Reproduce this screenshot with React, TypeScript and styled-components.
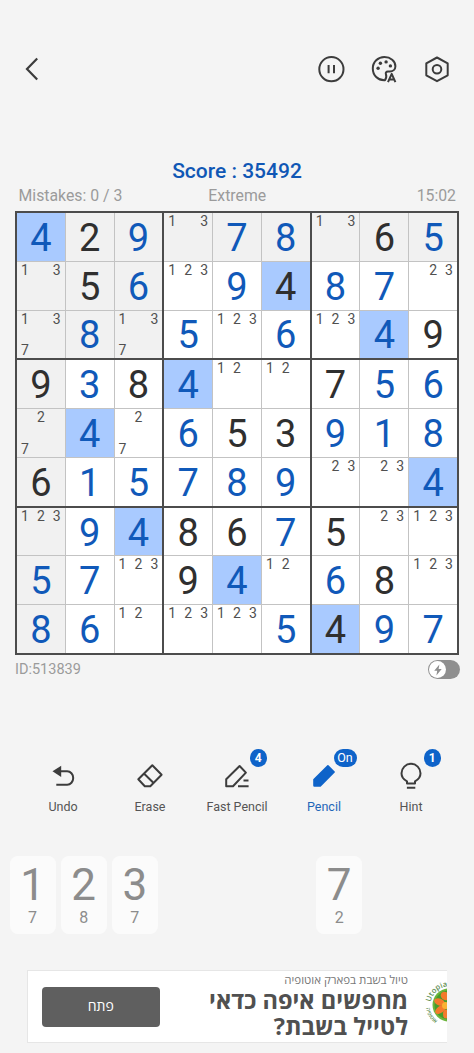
// App.tsx
import React, { useState } from "react";
import styled, { createGlobalStyle } from "styled-components";

type CellData = {
  value?: number;
  given?: boolean;
  notes?: number[];
};

// "4" = filled by player, "g4" = given clue, "n13" = pencil notes 1 and 3
const rows = [
  "4 g2 9 n13 7 8 n13 g6 5",
  "n13 g5 6 n123 9 g4 8 7 n23",
  "n137 8 n137 5 n123 6 n123 4 g9",
  "g9 3 g8 4 n12 n12 g7 5 6",
  "n27 4 n27 6 g5 g3 9 1 8",
  "g6 1 5 7 8 9 n23 n23 4",
  "n123 9 4 g8 g6 7 g5 n23 n123",
  "5 7 n123 g9 4 n12 6 g8 n123",
  "8 6 n12 n123 n123 5 g4 9 7",
];

const parseCell = (token: string): CellData => {
  if (token[0] === "n") return { notes: token.slice(1).split("").map(Number) };
  if (token[0] === "g") return { value: Number(token[1]), given: true };
  return { value: Number(token) };
};

const board = rows.map((row) => row.split(" ").map(parseCell));
const nine = [0, 1, 2, 3, 4, 5, 6, 7, 8];

const keys = [
  { digit: 1, left: 7 },
  { digit: 2, left: 8 },
  { digit: 3, left: 7 },
  { digit: 4, left: 0 },
  { digit: 5, left: 0 },
  { digit: 6, left: 0 },
  { digit: 7, left: 2 },
  { digit: 8, left: 0 },
  { digit: 9, left: 0 },
];

function App() {
  const [selected, setSelected] = useState({ row: 0, col: 0 });
  const [pencil, setPencil] = useState(true);
  const selectedValue = board[selected.row][selected.col].value;

  const isPeer = (row: number, col: number) =>
    row === selected.row ||
    col === selected.col ||
    (Math.floor(row / 3) === Math.floor(selected.row / 3) &&
      Math.floor(col / 3) === Math.floor(selected.col / 3));

  return (
    <Container>
      <GlobalStyle />
      <Header>
        <BackButton aria-label="Back">
          <svg width="14" height="24" viewBox="0 0 14 24">
            <path d="M12.2 1.5 2 12l10.2 10.5" />
          </svg>
        </BackButton>
        <HeaderIcons>
          <PauseIcon />
          <PaletteIcon />
          <SettingsIcon />
        </HeaderIcons>
      </Header>
      <Score>Score : 35492</Score>
      <StatusRow>
        <span>Mistakes: 0 / 3</span>
        <span>Extreme</span>
        <span>15:02</span>
      </StatusRow>
      <Board>
        {nine.map((box) => (
          <Box key={box}>
            {nine.map((i) => {
              const row = Math.floor(box / 3) * 3 + Math.floor(i / 3);
              const col = (box % 3) * 3 + (i % 3);
              const cell = board[row][col];
              const same = !!cell.value && cell.value === selectedValue;
              return (
                <Cell
                  key={i}
                  $same={same}
                  $peer={isPeer(row, col)}
                  onClick={() => setSelected({ row, col })}
                >
                  {cell.value ? (
                    <Digit $given={cell.given}>{cell.value}</Digit>
                  ) : (
                    <Notes>
                      {nine.map((n) => (
                        <Note key={n}>
                          {cell.notes?.includes(n + 1) ? n + 1 : ""}
                        </Note>
                      ))}
                    </Notes>
                  )}
                </Cell>
              );
            })}
          </Box>
        ))}
      </Board>
      <BoardFooter>
        <span>ID:513839</span>
        <Switch>
          <Knob>
            <svg width="10" height="12" viewBox="0 0 10 12">
              <path d="M6.4.6 1.2 6.8h3L3.4 11.4l5.3-6.5H5.6z" fill="#8f8f8f" />
            </svg>
          </Knob>
        </Switch>
      </BoardFooter>
      <Tools>
        <Tool>
          <UndoIcon />
          <ToolLabel>Undo</ToolLabel>
        </Tool>
        <Tool>
          <EraseIcon />
          <ToolLabel>Erase</ToolLabel>
        </Tool>
        <Tool>
          <FastPencilIcon />
          <Badge>4</Badge>
          <ToolLabel>Fast Pencil</ToolLabel>
        </Tool>
        <Tool onClick={() => setPencil(!pencil)}>
          <PencilIcon />
          <Badge $wide>{pencil ? "On" : "Off"}</Badge>
          <ToolLabel $active={pencil}>Pencil</ToolLabel>
        </Tool>
        <Tool>
          <HintIcon />
          <Badge>1</Badge>
          <ToolLabel>Hint</ToolLabel>
        </Tool>
      </Tools>
      <Keypad>
        {keys.map(({ digit, left }) =>
          left > 0 ? (
            <Key key={digit}>
              <KeyDigit>{digit}</KeyDigit>
              <KeyCount>{left}</KeyCount>
            </Key>
          ) : (
            <span key={digit} />
          )
        )}
      </Keypad>
      <Ad>
        <AdButton>פתח</AdButton>
        <AdText>
          <AdCaption>טיול בשבת בפארק אוטופיה</AdCaption>
          <AdTitle>
            מחפשים איפה כדאי
            <br />
            לטייל בשבת?
          </AdTitle>
        </AdText>
        <AdLogo />
      </Ad>
    </Container>
  );
}

const PauseIcon = () => (
  <LineIcon width="28" height="28" viewBox="0 0 28 28">
    <circle cx="14.400" cy="14.200" r="12.100" />
    <path d="M11.600 10v8.200M17 10v8.200" />
  </LineIcon>
);

const PaletteIcon = () => (
  <LineIcon width="28" height="28" viewBox="0 0 28 28">
    <path d="M15 25.200C7.800 25.600 2.800 20.200 2.800 13.500 2.800 7 7.900 2 14.400 2c6.200 0 11 4 11 9.200 0 3.300-2.500 5.300-5.600 5.300h-1.900c-1.700 0-2.500 1.300-2 2.700.7 2 .9 3.600-.9 6z" />
    <g fill="#3c3c3c" stroke="none">
      <circle cx="8.100" cy="13.300" r="1.700" />
      <circle cx="10.400" cy="8.200" r="1.700" />
      <circle cx="16.100" cy="6.900" r="1.700" />
      <circle cx="20.400" cy="10.900" r="1.700" />
    </g>
    <path d="m18 27.200 3.700-8.400 3.700 8.400M19.300 24.500h4.800" />
  </LineIcon>
);

const SettingsIcon = () => (
  <LineIcon width="28" height="28" viewBox="0 0 28 28">
    <path d="M14 2.500 24.700 8.400v11.900L14 26.200 3.300 20.300V8.400z" />
    <circle cx="14" cy="14.300" r="4.300" />
  </LineIcon>
);

const UndoIcon = () => (
  <LineIcon width="28" height="28" viewBox="0 0 28 28">
    <path d="M11 9.300h7.200a6 6.700 0 0 1 0 13.400H7.300" />
    <path d="M3.500 9.300 12.200 3.700v11.200z" fill="#3c3c3c" stroke="none" />
  </LineIcon>
);

const EraseIcon = () => (
  <LineIcon width="28" height="28" viewBox="0 0 28 28">
    <path d="m2.300 17.200 14-14 9.300 9.600-11.300 11.400H8.800zM8.200 11.700l9.400 9.300" />
  </LineIcon>
);

const FastPencilIcon = () => (
  <LineIcon width="28" height="28" viewBox="0 0 28 28">
    <path d="M3.200 24.200v-7L16.600 4l6.300 6.600L10 24.200zM15 24.200h10.600M20.500 18.500h5" />
  </LineIcon>
);

const PencilIcon = () => (
  <svg width="28" height="28" viewBox="0 0 28 28">
    <path
      d="M3.200 17.300 17.300 3.200q.6-.5 1.200 0l6.200 6.200q.6.600 0 1.200L10.600 24.700H4.400q-1.200 0-1.200-1.200z"
      fill="#0e63c9"
    />
  </svg>
);

const HintIcon = () => (
  <LineIcon width="28" height="28" viewBox="0 0 28 28">
    <path d="M10 21.600v-2.300C6.300 17.500 4.500 14.900 4.500 11.300a9.500 9.500 0 0 1 19 0c0 3.600-1.800 6.200-5.500 8v2.300zM9.900 25.800h8.400" />
  </LineIcon>
);

const AdLogo = () => (
  <LogoSvg width="22" height="54" viewBox="0 0 22 54">
    <defs>
      <path id="logoTop" d="M5.500 24a18.500 18.500 0 0 1 37 0" />
      <path id="logoBottom" d="M1 24a23 23 0 0 0 23 23" />
    </defs>
    <circle cx="24" cy="24" r="16.500" fill="#6cb53c" />
    <circle cx="24" cy="24" r="14.500" fill="#459c2c" />
    <g fill="#f47a2c">
      <ellipse cx="14.500" cy="21" rx="5.500" ry="3.400" transform="rotate(20 14.500 21)" />
      <ellipse cx="15.500" cy="28.500" rx="6" ry="3.400" transform="rotate(-35 15.500 28.500)" />
      <ellipse cx="20" cy="15" rx="4.500" ry="4" transform="rotate(40 20 15)" />
      <ellipse cx="21" cy="33" rx="3" ry="4.500" />
    </g>
    <circle cx="20.500" cy="24.500" r="3.500" fill="#f9b233" />
    <LogoText>
      <textPath href="#logoTop" startOffset="3">Utopia</textPath>
    </LogoText>
    <LogoText $small>
      <textPath href="#logoBottom" startOffset="3">אוטופיה</textPath>
    </LogoText>
  </LogoSvg>
);

const GlobalStyle = createGlobalStyle`
  * {
    box-sizing: border-box;
  }

  body {
    margin: 0;
    background-color: #f4f4f4;
    font-family: Roboto, "Liberation Sans", sans-serif;
  }
`;

const Container = styled.div`
  display: flex;
  width: 474px;
  height: 1053px;
  flex-direction: column;
  overflow: hidden;
  background-color: #f4f4f4;
`;

const Header = styled.header`
  display: flex;
  margin-top: 55px;
  height: 28px;
  padding: 0 23px 0 24.500px;
  align-items: center;
  justify-content: space-between;
`;

const BackButton = styled.button`
  display: flex;
  padding: 0;
  border: none;
  background: none;
  cursor: pointer;

  path {
    fill: none;
    stroke: #3c3c3c;
    stroke-width: 2.2;
  }
`;

const HeaderIcons = styled.div`
  display: flex;
  gap: 25px;
`;

const LineIcon = styled.svg`
  fill: none;
  stroke: #3c3c3c;
  stroke-width: 2;
  stroke-linejoin: round;
`;

const Score = styled.div`
  margin-top: 74px;
  height: 28px;
  line-height: 28px;
  font-size: 21px;
  font-weight: 500;
  text-align: center;
  color: #1057b5;
`;

const StatusRow = styled.div`
  display: grid;
  grid-template-columns: 1fr 1fr 1fr;
  height: 26px;
  padding: 0 18px 0 18.500px;
  line-height: 22px;
  font-size: 15.800px;
  color: #9b9b9b;

  span:nth-child(2) {
    text-align: center;
  }

  span:nth-child(3) {
    text-align: right;
  }
`;

const Board = styled.div`
  display: grid;
  width: 444px;
  height: 444px;
  margin-left: 15px;
  padding: 2px;
  gap: 2px;
  flex-shrink: 0;
  grid-template-columns: repeat(3, minmax(0, 1fr));
  grid-template-rows: repeat(3, minmax(0, 1fr));
  background-color: #4c4c4c;
`;

const Box = styled.div`
  display: grid;
  gap: 1px;
  grid-template-columns: repeat(3, minmax(0, 1fr));
  grid-template-rows: repeat(3, minmax(0, 1fr));
  background-color: #c3c3c3;
`;

const Cell = styled.div<{ $same: boolean; $peer: boolean }>`
  display: flex;
  min-width: 0;
  min-height: 0;
  align-items: center;
  justify-content: center;
  background-color: ${({ $same, $peer }) =>
    $same ? "#a9caff" : $peer ? "#f1f1f1" : "#fff"};
  cursor: pointer;
`;

const Digit = styled.span<{ $given?: boolean }>`
  padding-top: 2px;
  font-size: 38px;
  line-height: 46px;
  color: ${({ $given }) => ($given ? "#2f2f2f" : "#1059b9")};
`;

const Notes = styled.div`
  display: grid;
  width: 100%;
  height: 100%;
  grid-template-columns: repeat(3, minmax(0, 1fr));
  grid-template-rows: repeat(3, minmax(0, 1fr));
`;

const Note = styled.span`
  font-size: 14px;
  line-height: 17px;
  text-align: center;
  color: #505050;
`;

const BoardFooter = styled.div`
  display: flex;
  height: 29px;
  padding: 0 14px 0 15px;
  align-items: center;
  justify-content: space-between;
  font-size: 14.500px;
  color: #9b9b9b;
`;

const Switch = styled.div`
  display: flex;
  width: 32px;
  height: 19px;
  padding: 1px;
  border-radius: 10px;
  background-color: #8f8f8f;
`;

const Knob = styled.div`
  display: flex;
  width: 17px;
  height: 17px;
  align-items: center;
  justify-content: center;
  border-radius: 50%;
  background-color: #fff;
`;

const Tools = styled.div`
  display: grid;
  margin-top: 78px;
  padding: 0 19.500px;
  grid-template-columns: repeat(5, 1fr);
`;

const Tool = styled.div`
  position: relative;
  display: flex;
  flex-direction: column;
  align-items: center;
  cursor: pointer;
`;

const ToolLabel = styled.span<{ $active?: boolean }>`
  margin-top: 8px;
  font-size: 12.500px;
  line-height: 18px;
  white-space: nowrap;
  color: ${({ $active }) => ($active ? "#1f66b8" : "#555")};
`;

const Badge = styled.span<{ $wide?: boolean }>`
  position: absolute;
  top: -13px;
  left: ${({ $wide }) => ($wide ? "53px" : "56px")};
  width: ${({ $wide }) => ($wide ? "23px" : "17.500px")};
  height: 17.500px;
  border-radius: 9px;
  background-color: #0e63c9;
  color: #fff;
  font-size: ${({ $wide }) => ($wide ? "12.500px" : "12px")};
  font-weight: ${({ $wide }) => ($wide ? 400 : 700)};
  line-height: 18px;
  text-align: center;
`;

const Keypad = styled.div`
  display: grid;
  margin-top: 40px;
  padding: 0 7px;
  height: 78px;
  grid-template-columns: repeat(9, 1fr);
`;

const Key = styled.div`
  display: flex;
  margin: 0 2.500px;
  flex-direction: column;
  align-items: center;
  border-radius: 8px;
  background-color: #fbfbfb;
  color: #8c8c8c;
  cursor: pointer;
`;

const KeyDigit = styled.span`
  margin-top: 6px;
  font-size: 44px;
  line-height: 47px;
`;

const KeyCount = styled.span`
  font-size: 16px;
  line-height: 17px;
`;

const Ad = styled.div`
  display: flex;
  width: 420px;
  height: 73px;
  margin: 36px 0 0 27px;
  border: 1px solid #e6e6e6;
  border-right: none;
  background-color: #fff;
`;

const AdButton = styled.button`
  width: 118.500px;
  height: 40px;
  margin: 16px 0 0 13.500px;
  padding: 0 0 3px;
  border: none;
  border-radius: 4px;
  background-color: #5f5f5f;
  color: #fff;
  font-family: "Open Sans", "DejaVu Sans", sans-serif;
  font-size: 14px;
  cursor: pointer;
`;

const AdText = styled.div`
  flex: 1;
  padding-right: 17px;
  direction: rtl;
  white-space: nowrap;
  font-family: "Open Sans", "DejaVu Sans", sans-serif;
`;

const AdCaption = styled.div`
  height: 17px;
  font-size: 11.500px;
  line-height: 18px;
  color: #777;
`;

const AdTitle = styled.div`
  font-size: 23.600px;
  font-weight: 700;
  line-height: 25.500px;
  color: #505050;
`;

const LogoSvg = styled.svg`
  margin-top: 10px;
  flex-shrink: 0;
`;

const LogoText = styled.text<{ $small?: boolean }>`
  font-family: "Open Sans", "DejaVu Sans", sans-serif;
  font-size: ${({ $small }) => ($small ? "5.500px" : "7.500px")};
  font-weight: 600;
  fill: #5f8f55;
`;

export default App;
